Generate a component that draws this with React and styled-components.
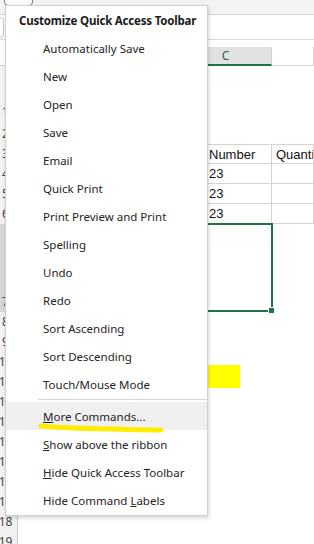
import React from 'react';
import styled, { createGlobalStyle } from 'styled-components';

const GlobalStyle = createGlobalStyle`
  html, body {
    margin: 0;
    padding: 0;
    background: #ffffff;
  }
  body {
    overflow: hidden;
  }
`;

const Screen = styled.div`
  position: relative;
  width: 314px;
  height: 544px;
  overflow: hidden;
  background: #ffffff;
  font-family: "Noto Sans", "Open Sans", sans-serif;
`;

const TopBand = styled.div`
  display: flex;
  align-items: flex-start;
  height: 14px;
  background: #f3f3f3;
  border-bottom: 1px solid #d6d6d6;
`;

const QatButton = styled.div`
  width: 27px;
  height: 8px;
  margin: -4px 0 0 4px;
  border: 1px solid #7c7c7c;
  border-radius: 4px;
  background: #fafafa;
`;

const FormulaBar = styled.div`
  height: 24px;
  border-bottom: 1px solid #d8d8d8;
  display: flex;
  align-items: center;
`;

const NameBox = styled.div`
  width: 60px;
  height: 19px;
  margin-left: -58px;
  border: 1px solid #c8c8c8;
  border-radius: 3px;
`;

const Columns = styled.div`
  display: grid;
  grid-template-columns: 24px 162px 92px 1fr;
  margin-left: -6px;
`;

const HeaderRow = styled(Columns)`
  margin-top: 7px;
  height: 19px;
`;

const ColHead = styled.div`
  display: flex;
  align-items: center;
  justify-content: center;
  font-size: 12px;
  box-sizing: border-box;
  color: ${p => (p.$active ? '#1e6b41' : '#444')};
  background: ${p => (p.$active ? '#e1e1e1' : '#ffffff')};
  border-bottom: ${p => (p.$active ? '2px solid #217346' : '1px solid #d4d4d4')};
  border-right: 1px solid #d4d4d4;
`;

const Row = styled(Columns)`
  height: ${p => p.$h}px;
`;

const RowHead = styled.div`
  display: flex;
  align-items: flex-end;
  justify-content: center;
  padding-bottom: 2px;
  box-sizing: border-box;
  font-size: 12px;
  color: #444;
  background: ${p => (p.$active ? '#d6d6d6' : '#f2f2f2')};
  border-right: 1px solid #c9c9c9;
`;

const Cell = styled.div`
  position: relative;
  box-sizing: border-box;
  display: flex;
  align-items: center;
  padding-left: ${p => p.$indent || 0}px;
  font-family: "Liberation Sans", Arial, sans-serif;
  font-size: 13px;
  color: #111;
  white-space: nowrap;
  overflow: hidden;
  border-top: ${p => (p.$top ? '1px solid #d4d4d4' : 'none')};
  border-bottom: ${p => (p.$table ? '1px solid #d4d4d4' : 'none')};
  border-right: ${p => (p.$table ? '1px solid #d4d4d4' : 'none')};
`;

const SelectedCell = styled(Cell)`
  overflow: visible;
`;

const Selection = styled.div`
  position: absolute;
  top: -1px;
  left: 0;
  right: -1px;
  bottom: 0;
  border: 2px solid #217346;
`;

const FillHandle = styled.div`
  position: absolute;
  right: -4px;
  bottom: -4px;
  width: 5px;
  height: 5px;
  background: #217346;
  border: 1px solid #ffffff;
`;

const Marker = styled.div`
  position: absolute;
  left: 208px;
  top: 365px;
  width: 32px;
  height: 23px;
  background: #ffff00;
`;

const Menu = styled.div`
  position: absolute;
  left: 5px;
  top: 5px;
  width: 203px;
  box-sizing: border-box;
  background: #ffffff;
  border: 1px solid #d0d0d0;
  box-shadow: 1px 2px 4px rgba(0, 0, 0, 0.16);
  font-family: "Noto Sans", "Open Sans", sans-serif;
  font-size: 11.5px;
  color: #242424;
  padding-bottom: 1px;
  z-index: 2;
`;

const MenuTitle = styled.div`
  height: 28px;
  display: flex;
  align-items: center;
  padding-left: 13px;
  font-weight: 700;
  letter-spacing: -0.2px;
  color: #1b1b1b;
`;

const MenuItem = styled.div`
  position: relative;
  height: 28px;
  display: flex;
  align-items: center;
  padding-left: 37px;
  white-space: nowrap;
  background: ${p => (p.$hover ? '#f0f0f0' : 'transparent')};
`;

const Separator = styled.div`
  height: 1px;
  margin: 1px 0 2px 32px;
  background: #d6d6d6;
`;

const Scribble = styled.svg`
  position: absolute;
  left: 31px;
  top: 19px;
`;

const items = [
  'Automatically Save',
  'New',
  'Open',
  'Save',
  'Email',
  'Quick Print',
  'Print Preview and Print',
  'Spelling',
  'Undo',
  'Redo',
  'Sort Ascending',
  'Sort Descending',
  'Touch/Mouse Mode',
];

const lowerItems = [
  ['More Commands...', 0, true],
  ['Show above the ribbon', 0],
  ['Hide Quick Access Toolbar', 0],
  ['Hide Command Labels', 13],
];

const rows = [
  { n: 1, h: 56 },
  { n: 2, h: 22 },
  { n: 3, h: 20, text: 'Number', d: 'Quanti', table: true, top: true },
  { n: 4, h: 20, text: '23', table: true },
  { n: 5, h: 20, text: '23', table: true },
  { n: 6, h: 20, text: '23', table: true },
  { n: 7, h: 88, selected: true },
  ...Array.from({ length: 12 }, (_, i) => ({ n: 8 + i, h: 20 })),
];

const Label = ({ text, at }) => {
  if (at === undefined) return text;
  return (
    <span>
      {text.slice(0, at)}
      <u>{text[at]}</u>
      {text.slice(at + 1)}
    </span>
  );
};

const App = () => (
  <Screen>
    <GlobalStyle />
    <TopBand>
      <QatButton />
    </TopBand>
    <FormulaBar>
      <NameBox />
    </FormulaBar>
    <HeaderRow>
      <ColHead />
      <ColHead />
      <ColHead $active>C</ColHead>
      <ColHead />
    </HeaderRow>
    {rows.map(r => (
      <Row key={r.n} $h={r.h}>
        <RowHead $active={r.selected}>{r.n}</RowHead>
        <Cell />
        {r.selected ? (
          <SelectedCell>
            <Selection>
              <FillHandle />
            </Selection>
          </SelectedCell>
        ) : (
          <Cell $indent={29} $table={r.table} $top={r.top}>
            {r.text}
          </Cell>
        )}
        <Cell $indent={4} $top={r.top} $table={r.table}>
          {r.d}
        </Cell>
      </Row>
    ))}
    <Marker />
    <Menu>
      <MenuTitle>Customize Quick Access Toolbar</MenuTitle>
      {items.map(label => (
        <MenuItem key={label}>{label}</MenuItem>
      ))}
      <Separator />
      {lowerItems.map(([label, at, hover]) => (
        <MenuItem key={label} $hover={hover}>
          <Label text={label} at={at} />
          {hover && (
            <Scribble width="128" height="12" viewBox="0 0 128 12">
              <path
                d="M4 5 C 30 8, 80 8, 124 9"
                fill="none"
                stroke="#ffec00"
                strokeWidth="5"
                strokeLinecap="round"
              />
            </Scribble>
          )}
        </MenuItem>
      ))}
    </Menu>
  </Screen>
);

export default App;
